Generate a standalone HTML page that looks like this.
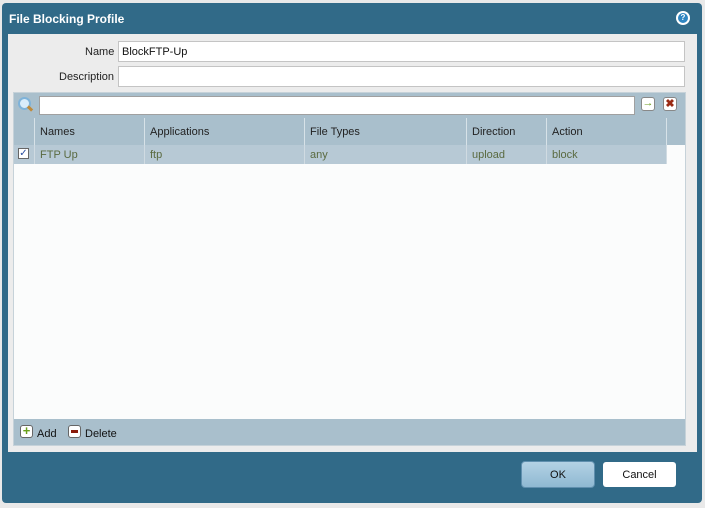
<html><head><style>
body{margin:0;width:705px;height:508px;background:#e9e9e9;font-family:"Liberation Sans",sans-serif;font-size:11px;position:relative;overflow:hidden}
.a{position:absolute}
.dlg{left:2px;top:3px;width:700px;height:500px;background:#316a88;border-radius:4px}
.inp{background:#fff;border:1px solid #c4c4c4;box-sizing:border-box}
.hd{top:118px;height:27px;background:#a9bfcc;border-right:1px solid #d7e2e8;box-sizing:border-box;line-height:29px;padding-left:5px;color:#222}
.rw{top:145px;height:19px;background:#b7c9d5;border-right:1px solid #d0dbe2;box-sizing:border-box;line-height:21px;padding-left:5px;color:#5a6a40}
</style></head><body>
<div class="a dlg"></div>
<div class="a" style="left:9px;top:12px;color:#fff;font-weight:bold;font-size:12px">File Blocking Profile</div>
<div class="a" style="left:676px;top:11px;width:14px;height:14px;border-radius:50%;background:#fff;"><div class="a" style="left:2px;top:2px;width:10px;height:10px;border-radius:50%;background:#2f86c2;color:#fff;font-size:8px;font-weight:bold;text-align:center;line-height:10px">?</div></div>
<div class="a" style="left:8px;top:34px;width:689px;height:418px;background:#ececec"></div>
<div class="a" style="left:85px;top:46px;color:#222">Name</div>
<div class="a inp" style="left:118px;top:41px;width:567px;height:21px;padding:4px 0 0 3px;color:#111">BlockFTP-Up</div>
<div class="a" style="left:59px;top:71px;color:#222">Description</div>
<div class="a inp" style="left:118px;top:66px;width:567px;height:21px"></div>
<div class="a" style="left:13px;top:92px;width:673px;height:354px;background:#fbfcfc;border:1px solid #c6d2d9;box-sizing:border-box"></div>
<div class="a" style="left:14px;top:93px;width:671px;height:25px;background:#a9bfcc"></div>
<div class="a" style="left:18px;top:97px;width:9px;height:9px;border-radius:50%;border:2px solid #7fb3d9;background:#d9ecfa"></div>
<div class="a" style="left:27px;top:107px;width:6px;height:3px;background:#c08a3a;transform:rotate(45deg)"></div>
<div class="a inp" style="left:39px;top:96px;width:596px;height:19px;border-color:#a0a0a0"></div>
<div class="a" style="left:641px;top:97px;width:14px;height:14px;background:#fff;border:1px solid #888;border-radius:3px;box-sizing:border-box;color:#6a9a1a;font-size:11px;line-height:11px;text-align:center;font-weight:bold">→</div>
<div class="a" style="left:663px;top:97px;width:14px;height:14px;background:#fff;border:1px solid #888;border-radius:3px;box-sizing:border-box;color:#9a2a14;font-size:11px;line-height:12px;text-align:center;font-weight:bold">✖</div>
<div class="a hd" style="left:14px;width:21px"></div>
<div class="a hd" style="left:35px;width:110px">Names</div>
<div class="a hd" style="left:145px;width:160px">Applications</div>
<div class="a hd" style="left:305px;width:162px">File Types</div>
<div class="a hd" style="left:467px;width:80px">Direction</div>
<div class="a hd" style="left:547px;width:120px">Action</div>
<div class="a hd" style="left:667px;width:18px;border:0"></div>
<div class="a rw" style="left:14px;width:21px"><div class="a" style="left:4px;top:3px;width:11px;height:11px;background:#fff;border:1px solid #666;box-sizing:border-box;color:#2a4ea0;font-size:10px;line-height:9px;text-align:center">✓</div></div>
<div class="a rw" style="left:35px;width:110px">FTP Up</div>
<div class="a rw" style="left:145px;width:160px">ftp</div>
<div class="a rw" style="left:305px;width:162px">any</div>
<div class="a rw" style="left:467px;width:80px">upload</div>
<div class="a rw" style="left:547px;width:120px">block</div>
<div class="a" style="left:14px;top:419px;width:671px;height:26px;background:#a9bfcc"></div>
<div class="a" style="left:20px;top:425px;width:13px;height:13px;background:#fff;border:1px solid #666;border-radius:3px;box-sizing:border-box;color:#6aa01a;font-weight:bold;font-size:13px;line-height:10px;text-align:center">+</div>
<div class="a" style="left:37px;top:428px;color:#111">Add</div>
<div class="a" style="left:68px;top:425px;width:13px;height:13px;background:#fff;border:1px solid #666;border-radius:3px;box-sizing:border-box"><div class="a" style="left:2px;top:4px;width:7px;height:3px;background:#8a1a0a"></div></div>
<div class="a" style="left:85px;top:428px;color:#111">Delete</div>
<div class="a" style="left:521px;top:461px;width:74px;height:27px;border-radius:4px;background:linear-gradient(#b3d2e4,#8fb9d2);border:1px solid #5f8fae;box-sizing:border-box;text-align:center;line-height:27px;color:#111">OK</div>
<div class="a" style="left:603px;top:462px;width:73px;height:25px;border-radius:3px;background:#fff;text-align:center;line-height:27px;color:#111">Cancel</div>
</body></html>
